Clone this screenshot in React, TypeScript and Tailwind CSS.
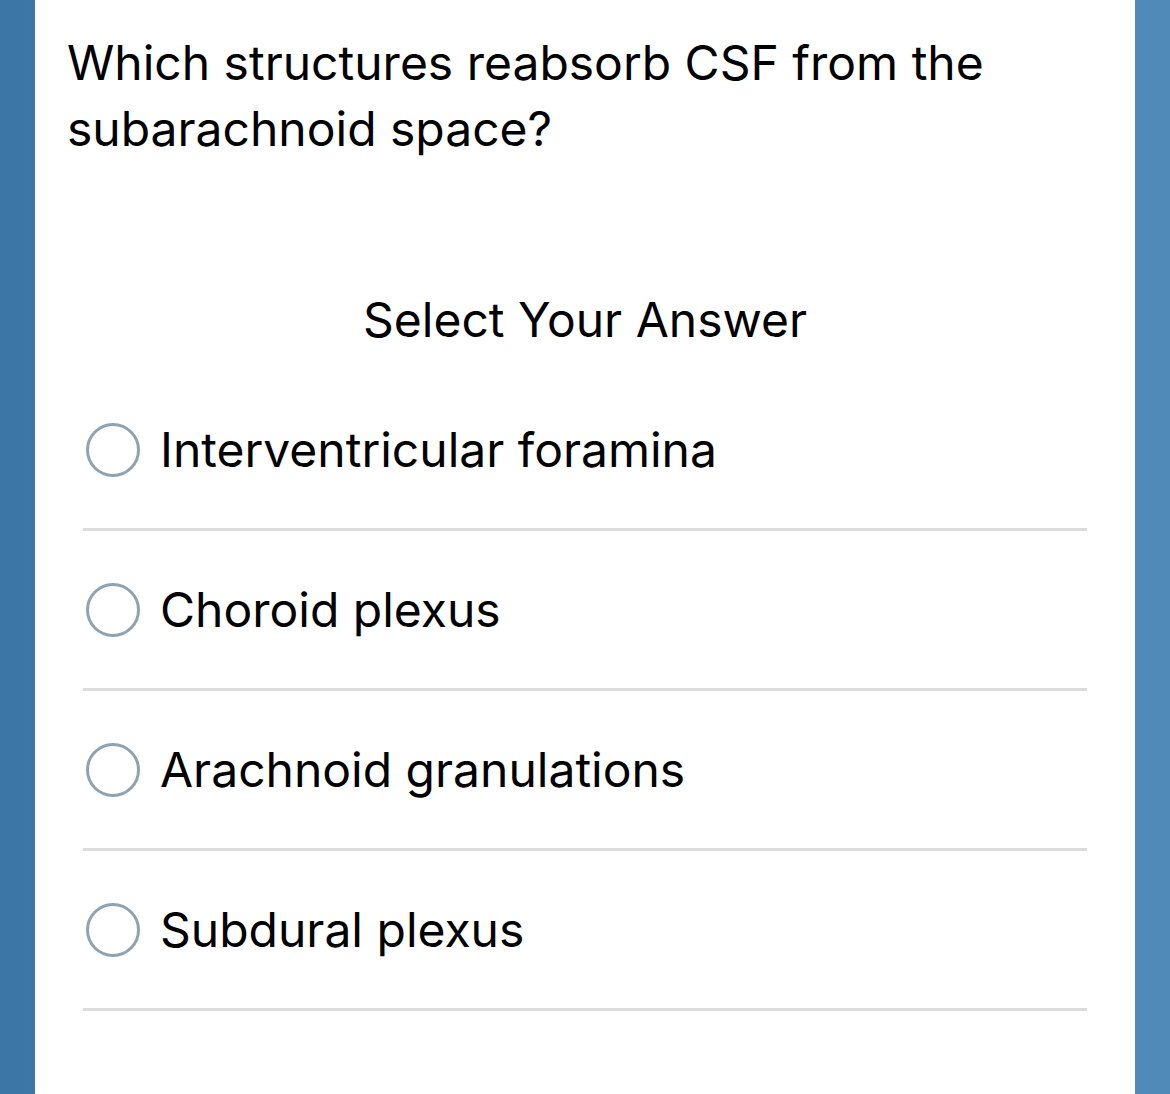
const options = [
  'Interventricular foramina',
  'Choroid plexus',
  'Arachnoid granulations',
  'Subdural plexus',
];

function Radio() {
  return <span className="block h-[54px] w-[54px] shrink-0 rounded-full border-[3px] border-[#8fa2b2]" />;
}

export default function App() {
  return (
    <div
      className="min-h-screen bg-linear-to-r from-[#3c76a7] to-[#508ab9] px-[35px]"
      style={{ fontFamily: 'Inter, "Noto Sans", sans-serif' }}
    >
      <div className="min-h-[1094px] bg-white text-black">
        {/* question */}
        <h1 className="pl-[32px] pr-[40px] pt-[30px] text-[48px] leading-[66px] font-normal">
          Which structures reabsorb CSF from the subarachnoid space?
        </h1>

        <p className="mt-[128px] text-center text-[48px] leading-[60px]">Select Your Answer</p>

        {/* answer list */}
        <ul className="mx-[48px] mt-[21px]">
          {options.map((o) => (
            <li key={o} className="flex h-[160px] items-center gap-[20px] border-b-[3px] border-[#dcdcdc] pl-[3px]">
              <Radio />
              <span className="text-[48px] leading-[60px]">{o}</span>
            </li>
          ))}
        </ul>
      </div>
    </div>
  );
}
